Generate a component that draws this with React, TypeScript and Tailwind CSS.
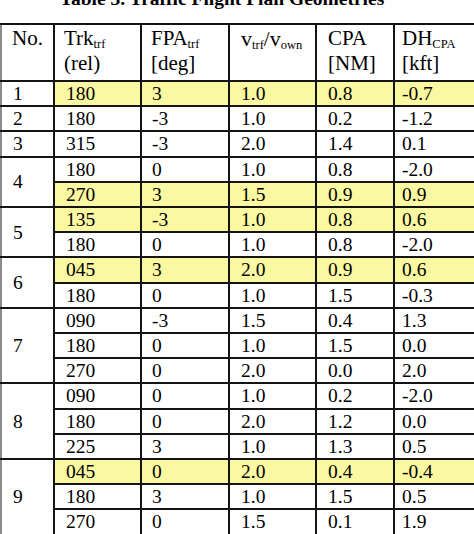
import React from 'react';

type Row = { v: string[]; hl?: boolean };
type Group = { no: string; rows: Row[] };

const groups: Group[] = [
  { no: '1', rows: [{ v: ['180', '3', '1.0', '0.8', '-0.7'], hl: true }] },
  { no: '2', rows: [{ v: ['180', '-3', '1.0', '0.2', '-1.2'] }] },
  { no: '3', rows: [{ v: ['315', '-3', '2.0', '1.4', '0.1'] }] },
  {
    no: '4',
    rows: [
      { v: ['180', '0', '1.0', '0.8', '-2.0'] },
      { v: ['270', '3', '1.5', '0.9', '0.9'], hl: true },
    ],
  },
  {
    no: '5',
    rows: [
      { v: ['135', '-3', '1.0', '0.8', '0.6'], hl: true },
      { v: ['180', '0', '1.0', '0.8', '-2.0'] },
    ],
  },
  {
    no: '6',
    rows: [
      { v: ['045', '3', '2.0', '0.9', '0.6'], hl: true },
      { v: ['180', '0', '1.0', '1.5', '-0.3'] },
    ],
  },
  {
    no: '7',
    rows: [
      { v: ['090', '-3', '1.5', '0.4', '1.3'] },
      { v: ['180', '0', '1.0', '1.5', '0.0'] },
      { v: ['270', '0', '2.0', '0.0', '2.0'] },
    ],
  },
  {
    no: '8',
    rows: [
      { v: ['090', '0', '1.0', '0.2', '-2.0'] },
      { v: ['180', '0', '2.0', '1.2', '0.0'] },
      { v: ['225', '3', '1.0', '1.3', '0.5'] },
    ],
  },
  {
    no: '9',
    rows: [
      { v: ['045', '0', '2.0', '0.4', '-0.4'], hl: true },
      { v: ['180', '3', '1.0', '1.5', '0.5'] },
      { v: ['270', '0', '1.5', '0.1', '1.9'] },
    ],
  },
];

// left padding per data column (Trk, FPA, v, CPA, DH)
const pads = ['pl-[11px]', 'pl-[10px]', 'pl-[11px]', 'pl-[11px]', 'pl-[7px]'];

const cell = 'border-2 border-[#141414] p-0 leading-[23.2px] align-middle';
const head = 'border-2 border-[#141414] p-0 pt-[1px] align-top text-left font-normal leading-[25px] text-[21px]';

const Sub = ({ children }: { children: React.ReactNode }) => (
  <sub className="text-[12.5px]">{children}</sub>
);

export default function App() {
  return (
    <div className="w-[474px] h-[534px] overflow-hidden bg-white text-black font-['Liberation_Serif',serif] text-[19.5px]">
      {/* Title (cut off at the top of the shot) */}
      <div className="-mt-[13px] h-[23px] leading-[23px] pr-[30px] text-center font-bold whitespace-nowrap">
        Table 3. Traffic Flight Plan Geometries
      </div>

      <table className="mt-[13px] w-[484px] table-fixed border-collapse">
        <colgroup>
          <col className="w-[53px]" />
          <col className="w-[87px]" />
          <col className="w-[88px]" />
          <col className="w-[87px]" />
          <col className="w-[78px]" />
          <col className="w-[91px]" />
        </colgroup>
        <thead>
          <tr className="h-[57px]">
            <th className={`${head} border-l-[#8c8c8c] pl-[10px]`}>No.</th>
            <th className={`${head} pl-[9px]`}>
              Trk<Sub>trf</Sub>
              <br />
              (rel)
            </th>
            <th className={`${head} pl-[9px]`}>
              FPA<Sub>trf</Sub>
              <br />
              [deg]
            </th>
            <th className={`${head} pl-[11px]`}>
              <span className="text-[22px]">v</span>
              <Sub>trf</Sub>/<span className="text-[22px]">v</span>
              <Sub>own</Sub>
            </th>
            <th className={`${head} pl-[11px]`}>
              CPA
              <br />
              [NM]
            </th>
            <th className={`${head} pl-[7px]`}>
              DH<Sub>CPA</Sub>
              <br />
              [kft]
            </th>
          </tr>
        </thead>
        <tbody>
          {groups.flatMap((g) =>
            g.rows.map((r, i) => (
              <tr key={g.no + '-' + i}>
                {i === 0 && (
                  <td
                    rowSpan={g.rows.length}
                    className="border-2 border-[#141414] border-l-[#8c8c8c] p-0 pl-[11px] align-middle leading-[23.2px] bg-white"
                  >
                    {g.no}
                  </td>
                )}
                {r.v.map((val, j) => (
                  <td
                    key={j}
                    className={`${cell} ${pads[j]} ${r.hl ? 'bg-[#fbf8a2]' : 'bg-white'}`}
                  >
                    {val}
                  </td>
                ))}
              </tr>
            ))
          )}
        </tbody>
      </table>
    </div>
  );
}
